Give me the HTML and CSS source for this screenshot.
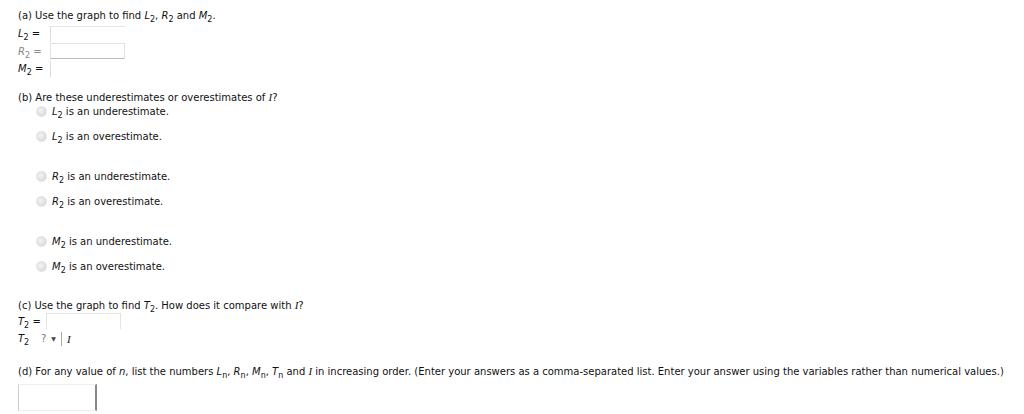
FILE: index.html
```html
<!DOCTYPE html>
<html>
<head>
<meta charset="utf-8">
<link rel="stylesheet" href="styles.css">
</head>
<body>
<div class="page">
  <section class="part part-a">
    <p class="q">(a) Use the graph to find <i>L</i><sub>2</sub>, <i>R</i><sub>2</sub> and <i>M</i><sub>2</sub>.</p>
    <div class="answers">
      <div class="row"><span class="lbl"><i>L</i><sub>2</sub> =</span><span class="box box-l"></span></div>
      <div class="row"><span class="lbl faded"><i>R</i><sub>2</sub> =</span><span class="box box-r"></span></div>
      <div class="row"><span class="lbl"><i>M</i><sub>2</sub> =</span><span class="box box-m"></span></div>
    </div>
  </section>

  <section class="part part-b">
    <p class="q">(b) Are these underestimates or overestimates of <i class="serif">I</i>?</p>
    <div class="group">
      <label class="opt"><span class="radio"></span><span><i>L</i><sub>2</sub> is an underestimate.</span></label>
      <label class="opt"><span class="radio"></span><span><i>L</i><sub>2</sub> is an overestimate.</span></label>
    </div>
    <div class="group">
      <label class="opt"><span class="radio"></span><span><i>R</i><sub>2</sub> is an underestimate.</span></label>
      <label class="opt"><span class="radio"></span><span><i>R</i><sub>2</sub> is an overestimate.</span></label>
    </div>
    <div class="group">
      <label class="opt"><span class="radio"></span><span><i>M</i><sub>2</sub> is an underestimate.</span></label>
      <label class="opt"><span class="radio"></span><span><i>M</i><sub>2</sub> is an overestimate.</span></label>
    </div>
  </section>

  <section class="part part-c">
    <p class="q">(c) Use the graph to find <i>T</i><sub>2</sub>. How does it compare with <i class="serif">I</i>?</p>
    <div class="row row-t"><span class="lbl"><i>T</i><sub>2</sub> =</span><span class="box box-t"></span></div>
    <div class="row row-sel"><span class="lbl"><i>T</i><sub>2</sub></span><span class="sel"><span class="qm">?</span><span class="arrow">&#9660;</span></span><i class="serif">I</i></div>
  </section>

  <section class="part part-d">
    <p class="q">(d) For any value of <i>n</i>, list the numbers <i>L</i><sub>n</sub>, <i>R</i><sub>n</sub>, <i>M</i><sub>n</sub>, <i>T</i><sub>n</sub> and <i class="serif">I</i> in increasing order. (Enter your answers as a comma-separated list. Enter your answer using the variables rather than numerical values.)</p>
    <span class="box box-d"></span>
  </section>
</div>
</body>
</html>
```

FILE: styles.css
```css
html, body {
  margin: 0;
  padding: 0;
  background: #fff;
}
body {
  font-family: "DejaVu Sans", Verdana, sans-serif;
  font-size: 10px;
  color: #111;
}
.page {
  padding: 9px 0 0 18px;
}
.q {
  margin: 0;
  line-height: 14px;
  white-space: nowrap;
}
sub {
  font-size: 8px;
  vertical-align: -3px;
  line-height: 0;
}
i {
  font-style: oblique;
  font-synthesis: style;
}
.serif {
  font-family: "Liberation Serif", serif;
  font-size: 11px;
  font-style: italic;
}
.answers {
  display: flex;
  flex-direction: column;
  margin-top: 2px;
}
.row {
  display: flex;
  align-items: center;
  height: 17.5px;
}
.lbl {
  display: inline-block;
  width: 32px;
  text-align: left;
}
.faded { color: #888; }
.box {
  display: inline-block;
  box-sizing: border-box;
  width: 75px;
  height: 16px;
  background: #fff;
}
.box-l { border-top: 1px solid #e6e6e6; border-left: 1px solid #ddd; }
.box-r { border: 1px solid #e2e2e2; border-bottom: 1px solid #bbb; }
.box-m { border-left: 1px solid #ddd; }
.part-b { margin-top: 12px; }
.group {
  display: flex;
  flex-direction: column;
  gap: 11px;
  margin-left: 18px;
  margin-bottom: 26px;
}
.opt {
  display: flex;
  align-items: center;
  gap: 5px;
  height: 14px;
}
.radio {
  display: inline-block;
  width: 11px;
  height: 11px;
  border-radius: 50%;
  background: radial-gradient(circle at 40% 40%, #f4f4f4, #d2d2d2);
  border: 1px solid #e2e2e2;
  box-sizing: border-box;
}
.part-c { margin-top: -2px; }
.part-c .row-t .lbl { width: 28px; }
.box-t { border: 1px solid #e3e3e3; border-bottom: none; }
.part-c .row-sel .lbl { width: 16px; }
.sel {
  display: inline-flex;
  align-items: center;
  gap: 5px;
  height: 14px;
  padding: 0 5px 0 7px;
  border-right: 1px solid #aaa;
  margin-right: 5px;
  color: #777;
}
.arrow { font-size: 6px; color: #444; }
.part-d { margin-top: 16px; }
.box-d {
  display: block;
  width: 79px;
  height: 27px;
  margin-top: 5px;
  border: 1px solid #eee;
  border-left: 1px solid #ccc;
  border-right: 2px solid #888;
}
```
